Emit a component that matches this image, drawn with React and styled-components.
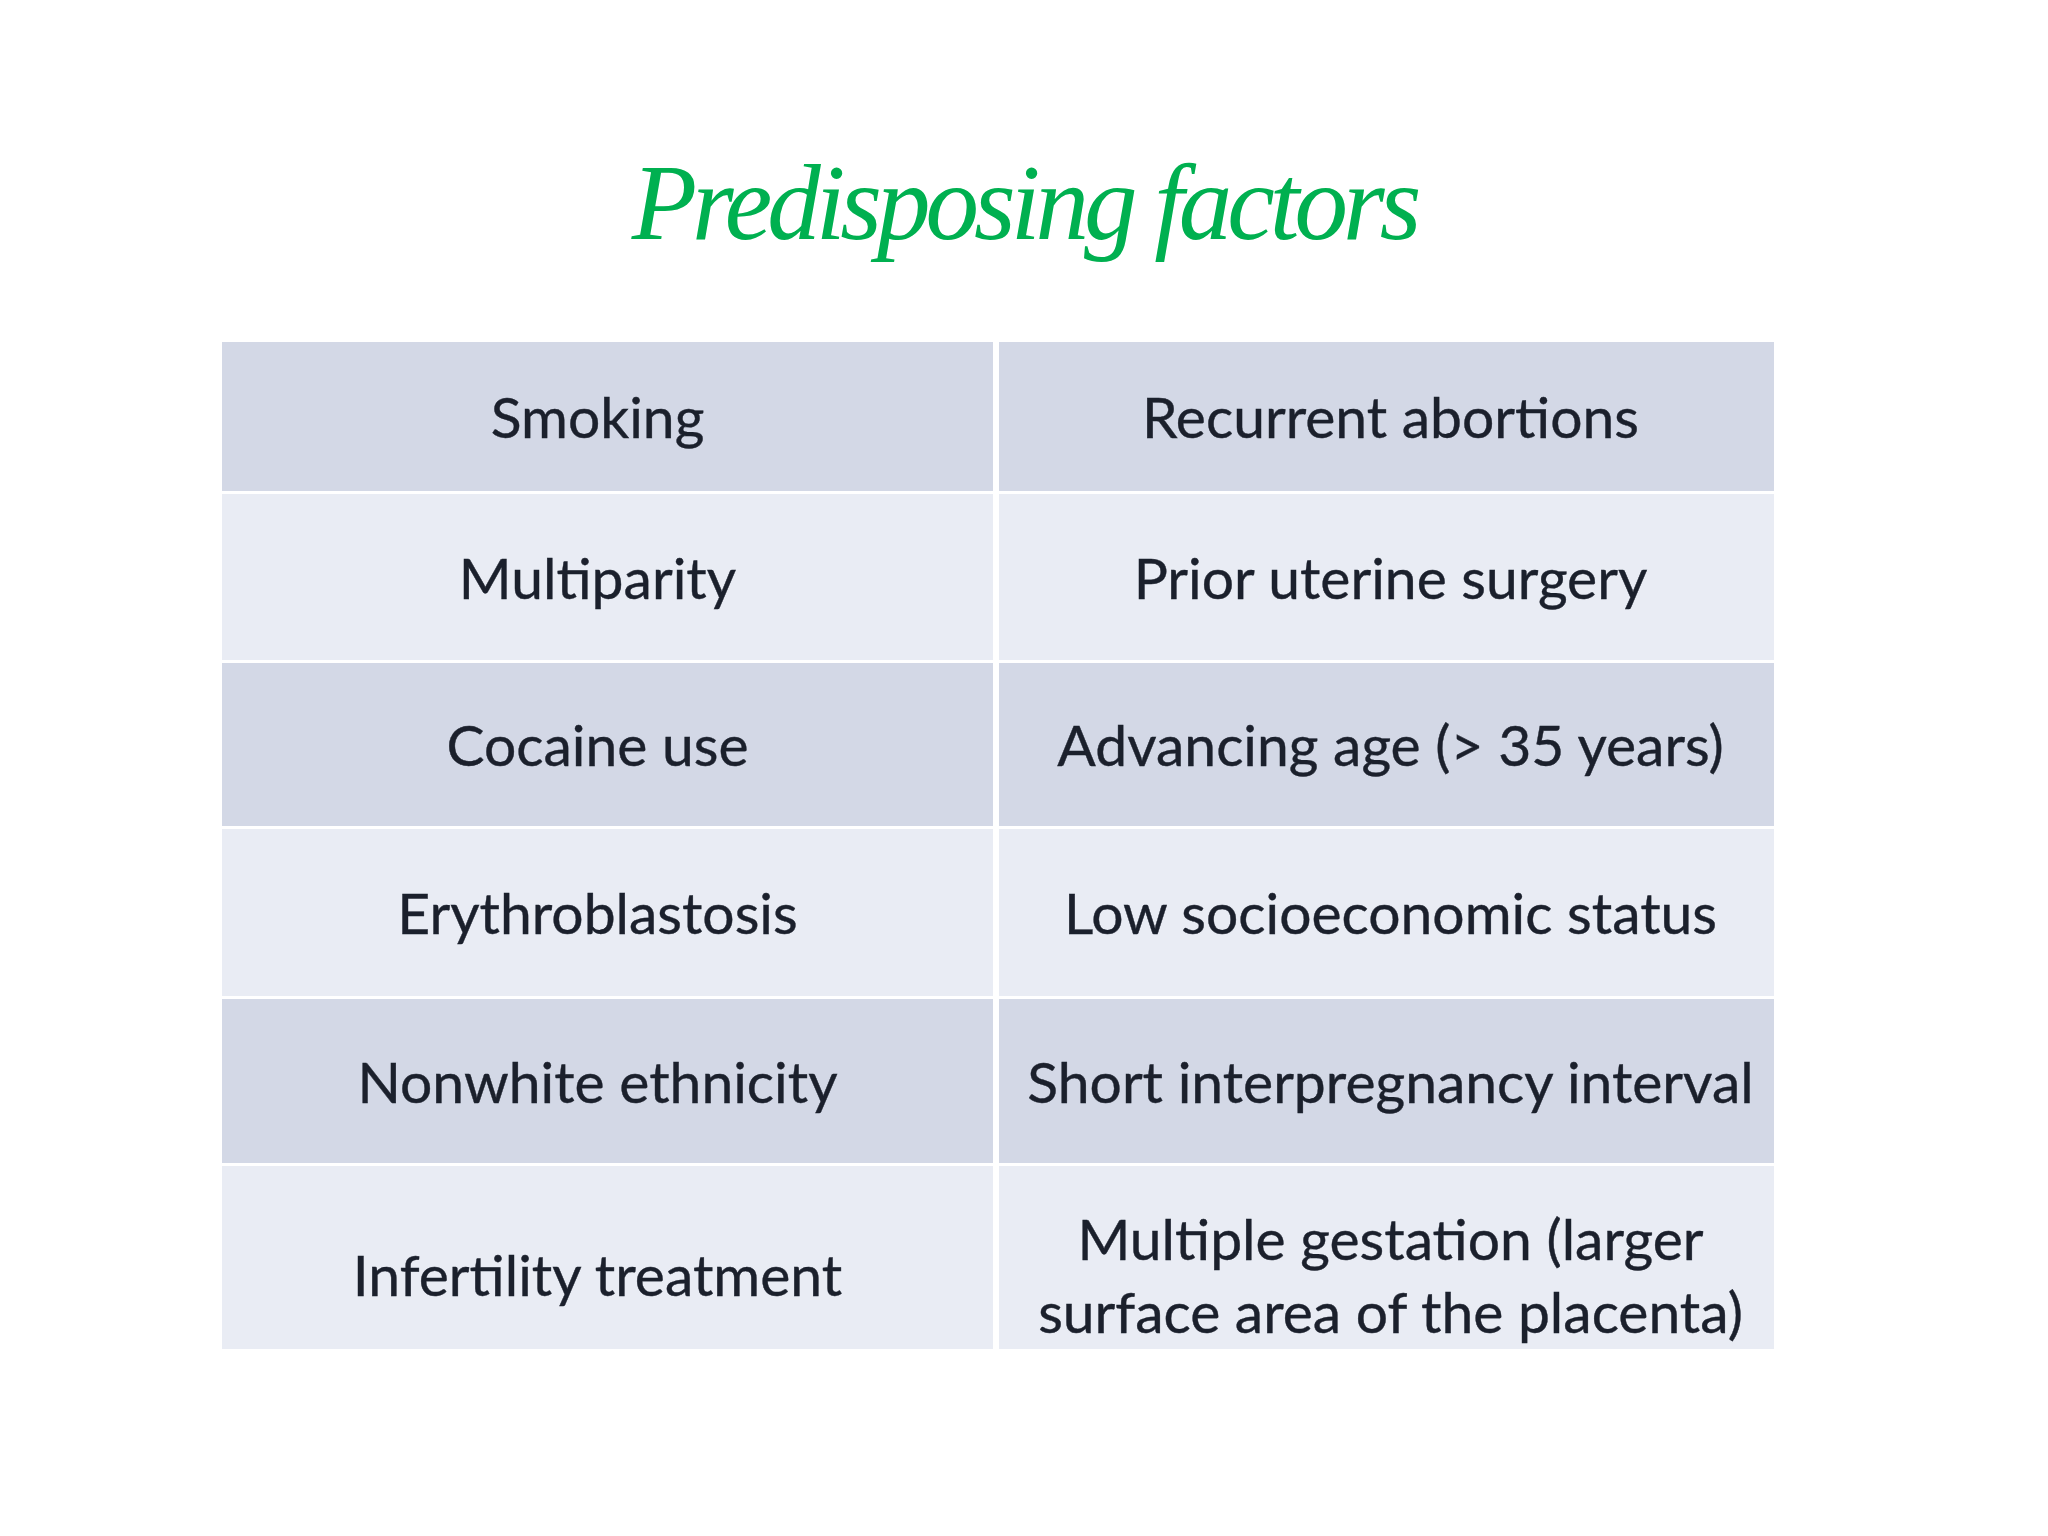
import React from 'react';
import styled, { createGlobalStyle } from 'styled-components';

const GlobalStyle = createGlobalStyle`
  html, body {
    margin: 0;
    padding: 0;
    background: #ffffff;
  }
`;

// Slide
const Slide = styled.div`
  width: 2048px;
  height: 1536px;
  background: #ffffff;
  display: flex;
  flex-direction: column;
  box-sizing: border-box;
  padding-top: 140px;
`;

// Title
const Title = styled.h1`
  margin: 0;
  align-self: center;
  font-family: "Liberation Serif", "DejaVu Serif", serif;
  font-style: italic;
  font-weight: normal;
  font-size: 107px;
  line-height: 126px;
  letter-spacing: -5px;
  color: #00b050;
`;

// Table
const Table = styled.div`
  margin-top: 76px;
  margin-left: 222px;
  display: grid;
  grid-template-columns: 771px 775px;
  grid-template-rows: 149px 166px 163px 167px 164px 183px;
  column-gap: 6px;
  row-gap: 3px;
`;

const Cell = styled.div`
  background: ${(p) => (p.dark ? '#d3d8e6' : '#e9ecf4')};
  display: flex;
  align-items: center;
  justify-content: center;
  text-align: center;
  box-sizing: border-box;
  padding-top: ${(p) => p.offset || 0}px;
  padding-left: ${(p) => (p.right ? 8 : 0)}px;
  padding-right: ${(p) => (p.right ? 0 : 20)}px;
  font-family: Lato, "Open Sans", sans-serif;
  font-size: 57px;
  line-height: 73px;
  color: #1b202c;
  -webkit-text-stroke: 0.4px #1b202c;
  white-space: nowrap;
`;

const rows = [
  ['Smoking', 'Recurrent abortions'],
  ['Multiparity', 'Prior uterine surgery'],
  ['Cocaine use', 'Advancing age (> 35 years)'],
  ['Erythroblastosis', 'Low socioeconomic status'],
  ['Nonwhite ethnicity', 'Short interpregnancy interval'],
  ['Infertility treatment', <>Multiple gestation (larger<br />surface area of the placenta)</>],
];

const App = () => {
  return (
    <>
      <GlobalStyle />
      <Slide>
        <Title>Predisposing factors</Title>
        <Table>
          {rows.map((row, i) => {
            const offset = i === 0 ? -6 : i === 5 ? 34 : 0;
            return (
              <React.Fragment key={i}>
                <Cell dark={i % 2 === 0} offset={offset}>{row[0]}</Cell>
                <Cell dark={i % 2 === 0} offset={offset} right>{row[1]}</Cell>
              </React.Fragment>
            );
          })}
        </Table>
      </Slide>
    </>
  );
};

export default App;
